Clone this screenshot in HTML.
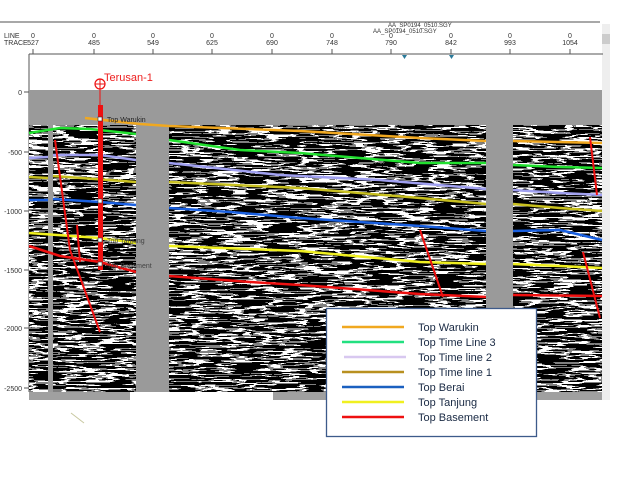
<!DOCTYPE html>
<html><head><meta charset="utf-8"><style>
html,body{margin:0;padding:0;background:#fff;width:638px;height:478px;overflow:hidden}
svg{display:block}
text{font-family:"Liberation Sans",sans-serif}
</style></head><body>
<svg width="638" height="478" viewBox="0 0 638 478" xmlns="http://www.w3.org/2000/svg">
<defs>
<filter id="seis" x="0" y="0" width="100%" height="100%" color-interpolation-filters="sRGB">
<feTurbulence type="fractalNoise" baseFrequency="0.03 0.35" numOctaves="2" seed="3" result="n"/>
<feColorMatrix in="n" type="matrix" values="1 0 0 0 0  1 0 0 0 0  1 0 0 0 0  0 0 0 0 1" result="g"/>
<feComponentTransfer in="g"><feFuncR type="discrete" tableValues="0 0 0 0 1 0 0 0"/><feFuncG type="discrete" tableValues="0 0 0 0 1 0 0 0"/><feFuncB type="discrete" tableValues="0 0 0 0 1 0 0 0"/></feComponentTransfer>
</filter>
<clipPath id="sc"><path d="M29 125H48V392H29Z M53 125H136V392H53Z M169 125H486V392H169Z M513 125H602V392H513Z"/></clipPath>
</defs>
<line x1="0" y1="22" x2="600" y2="22" stroke="#a8a8a8" stroke-width="2"/>
<rect x="602" y="24" width="8" height="376" fill="#eeeeee"/>
<rect x="602" y="34" width="8" height="10" fill="#ccc"/>
<g font-size="7" fill="#333">
<text x="4" y="38">LINE</text><text x="4" y="45">TRACE</text>
<text x="388" y="27" font-size="6">AA_SP0194_0510.SGY</text>
<text x="373" y="33" font-size="6">AA_SP0194_0510.SGY</text>
<g text-anchor="middle">
<text x="33" y="38">0</text><text x="33" y="45">527</text>
<text x="94" y="38">0</text><text x="94" y="45">485</text>
<text x="153" y="38">0</text><text x="153" y="45">549</text>
<text x="212" y="38">0</text><text x="212" y="45">625</text>
<text x="272" y="38">0</text><text x="272" y="45">690</text>
<text x="332" y="38">0</text><text x="332" y="45">748</text>
<text x="391" y="38">0</text><text x="391" y="45">790</text>
<text x="451" y="38">0</text><text x="451" y="45">842</text>
<text x="510" y="38">0</text><text x="510" y="45">993</text>
<text x="570" y="38">0</text><text x="570" y="45">1054</text>
</g></g>
<g stroke="#555" stroke-width="1">
<line x1="29" y1="54" x2="603" y2="54"/>
<line x1="29" y1="54" x2="29" y2="392"/>
<line x1="33" y1="49" x2="33" y2="54"/><line x1="94" y1="49" x2="94" y2="54"/><line x1="153" y1="49" x2="153" y2="54"/><line x1="212" y1="49" x2="212" y2="54"/><line x1="272" y1="49" x2="272" y2="54"/><line x1="332" y1="49" x2="332" y2="54"/><line x1="391" y1="49" x2="391" y2="54"/><line x1="451" y1="49" x2="451" y2="54"/><line x1="510" y1="49" x2="510" y2="54"/><line x1="570" y1="49" x2="570" y2="54"/>
</g>
<path d="M402 55h5l-2.5 4z M449 55h5l-2.5 4z" fill="#2a7a9a"/>
<g font-size="7" fill="#333" text-anchor="end">
<text x="22" y="95">0</text><text x="22" y="155">-500</text><text x="22" y="214">-1000</text><text x="22" y="273">-1500</text><text x="22" y="331">-2000</text><text x="22" y="391">-2500</text>
</g>
<g stroke="#555"><line x1="24" y1="92" x2="29" y2="92"/><line x1="24" y1="152" x2="29" y2="152"/><line x1="24" y1="211" x2="29" y2="211"/><line x1="24" y1="270" x2="29" y2="270"/><line x1="24" y1="328" x2="29" y2="328"/><line x1="24" y1="388" x2="29" y2="388"/></g>
<rect x="29" y="90" width="573" height="302" fill="#9a9a9a"/>
<rect x="29" y="392" width="101" height="8" fill="#a0a0a0"/>
<rect x="273" y="392" width="329" height="8" fill="#a0a0a0"/>
<g clip-path="url(#sc)"><rect x="29" y="125" width="573" height="267" fill="#000" filter="url(#seis)"/></g>
<g fill="none" stroke-width="2.5" stroke-linejoin="round">
<path d="M85 118L140 124L169 126L300 131L420 138L486 141M513 141L602 143" stroke="#f0a820"/>
<path d="M29 133L60 128L90 129L136 134M169 140L240 150L300 153L420 163L486 163M513 165L560 167L602 168" stroke="#22e030"/>
<path d="M29 158L48 157M53 155L100 155L136 160M169 163L280 175L380 180L486 189M513 190L560 193L602 195" stroke="#a0a0f0"/>
<path d="M29 177L48 178M53 176L136 182M169 182L300 188L420 198L486 204M513 204L560 208L602 211" stroke="#c8c020"/>
<path d="M29 200L48 200M53 199L100 202L136 205M169 208L230 212L300 218L420 226L486 231M513 231L560 230L602 240" stroke="#1a60e0"/>
<path d="M29 233L100 238L136 243M169 246L300 251L420 262L486 264M513 264L560 266L602 268" stroke="#f0f020"/>
<path d="M29 246L60 256L100 262L136 272M169 276L250 282L300 285L420 294L486 297M513 295L602 296" stroke="#ee1010"/>
<path d="M55 140L70 250L100 332M420 230L443 297M590 137L597 195M583 252L600 318M77 225L80 262" stroke="#ee1010" stroke-width="2"/>
</g>
<line x1="100" y1="84" x2="100" y2="108" stroke="#ee1010" stroke-width="1"/>
<rect x="98" y="105" width="5" height="165" fill="#ee1010"/>
<g fill="#fff" stroke="#333" stroke-width="0.6"><rect x="98" y="117" width="4" height="4"/><rect x="98" y="199" width="4" height="4"/><rect x="98" y="238" width="4" height="4"/><rect x="98" y="262" width="4" height="4"/></g>
<circle cx="100" cy="84" r="5" fill="none" stroke="#ee1010" stroke-width="1.2"/>
<path d="M95 84H105M100 79V89" stroke="#ee1010" stroke-width="1"/>
<text x="104" y="81" font-size="11" fill="#ee2020">Terusan-1</text>
<text x="107" y="122" font-size="7" fill="#222">Top Warukin</text>
<text x="107" y="243" font-size="7" fill="#444">Top Tanjung</text>
<text x="107" y="268" font-size="7" fill="#444">Top Basement</text>
<line x1="71" y1="413" x2="84" y2="423" stroke="#c8c8a0" stroke-width="1"/>
<rect x="326.5" y="308.5" width="210" height="128" fill="#fff" stroke="#3d5a8a" stroke-width="1.3"/>
<g stroke-width="2.5">
<line x1="342" y1="327" x2="404" y2="327" stroke="#f0a820"/>
<line x1="342" y1="342" x2="404" y2="342" stroke="#22e080"/>
<line x1="344" y1="357" x2="406" y2="357" stroke="#d8c8f0"/>
<line x1="342" y1="372" x2="404" y2="372" stroke="#b89020"/>
<line x1="342" y1="387" x2="404" y2="387" stroke="#1a60c0"/>
<line x1="342" y1="402" x2="404" y2="402" stroke="#f0f020"/>
<line x1="342" y1="417" x2="404" y2="417" stroke="#ee1010"/>
</g>
<g font-size="11" fill="#1a2a44">
<text x="418" y="331">Top Warukin</text>
<text x="418" y="346">Top Time Line 3</text>
<text x="418" y="361">Top Time line 2</text>
<text x="418" y="376">Top Time line 1</text>
<text x="418" y="391">Top Berai</text>
<text x="418" y="406">Top Tanjung</text>
<text x="418" y="421">Top Basement</text>
</g>
</svg>
</body></html>
